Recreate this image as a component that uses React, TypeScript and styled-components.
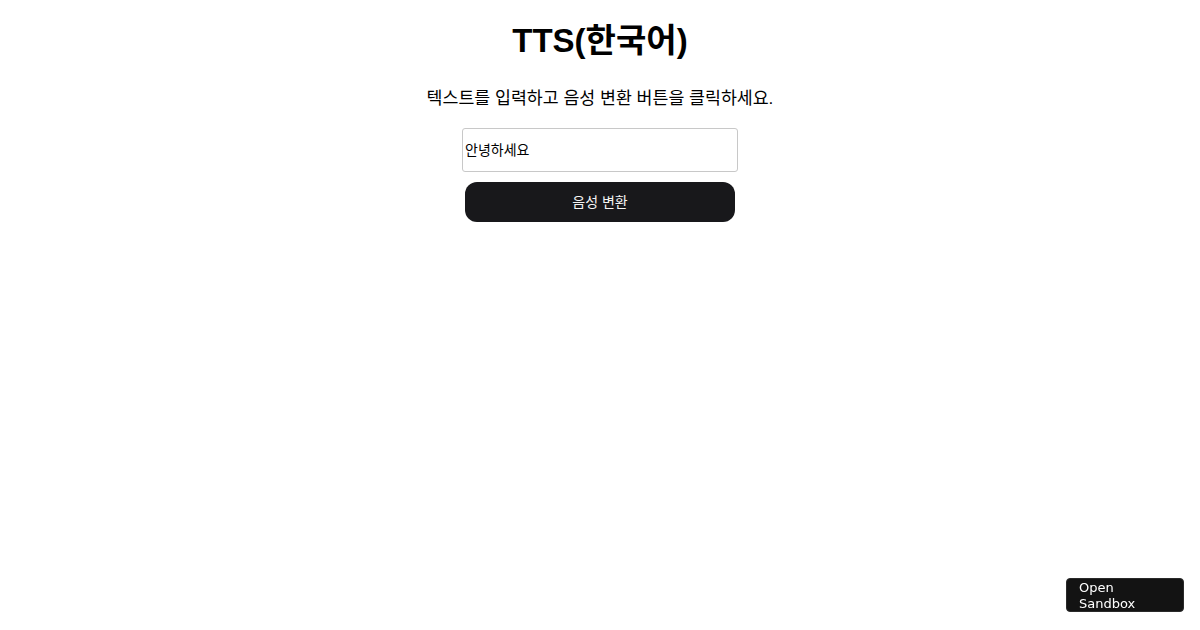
import React from "react";
import styled, { createGlobalStyle } from "styled-components";

const Global = createGlobalStyle`
  html, body { margin: 0; padding: 0; background: #fff; }
  body { font-family: "Liberation Sans", Arial, "Noto Sans CJK KR", sans-serif; color: #000; }
  * { box-sizing: border-box; }
`;

const Page = styled.main`
  display: flex;
  flex-direction: column;
  align-items: center;
  padding-top: 22px;
`;

const Title = styled.h1`
  margin: 0;
  font-size: 33px;
  line-height: 38px;
  font-weight: 700;
  font-family: "Liberation Sans", Arial, "Noto Sans CJK KR", sans-serif;
`;

const Desc = styled.p`
  margin: 28px 0 0;
  font-size: 17.3px;
  line-height: 20px;
  font-family: "Liberation Sans", Arial, "Noto Sans CJK KR", sans-serif;
`;

const Input = styled.input`
  margin-top: 20px;
  width: 276px;
  height: 44px;
  border: 1px solid #c8c8c8;
  border-radius: 3px;
  padding: 0 2px 2px;
  font-size: 14px;
  font-family: "Liberation Sans", Arial, "Noto Sans CJK KR", sans-serif;
  color: #000;
  outline: none;
`;

const Button = styled.button`
  margin-top: 10px;
  width: 270px;
  height: 40px;
  padding: 0 0 2px;
  border: none;
  border-radius: 12px;
  background: #18181b;
  color: #f4f4f4;
  font-size: 14px;
  font-family: "Liberation Sans", Arial, "Noto Sans CJK KR", sans-serif;
  cursor: pointer;
`;

const Sandbox = styled.a`
  position: fixed;
  right: 16px;
  bottom: 18px;
  width: 118px;
  height: 34px;
  padding: 1px 12px;
  background: #131313;
  border-radius: 4px;
  border: 1px solid #2a2a2a;
  color: #fff;
  font-family: "DejaVu Sans", sans-serif;
  font-size: 13px;
  line-height: 16px;
  text-decoration: none;
`;

export default function App() {
  return (
    <>
      <Global />
      <Page>
        <Title>TTS(한국어)</Title>
        <Desc>텍스트를 입력하고 음성 변환 버튼을 클릭하세요.</Desc>
        <Input defaultValue="안녕하세요" />
        <Button>음성 변환</Button>
      </Page>
      <Sandbox href="#">Open Sandbox</Sandbox>
    </>
  );
}
